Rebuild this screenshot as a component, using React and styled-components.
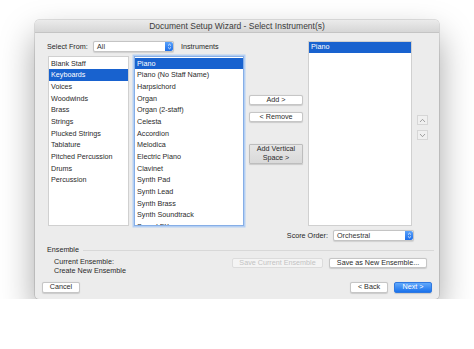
import React from 'react';
import styled, { createGlobalStyle, css } from 'styled-components';

const categories = [
  'Blank Staff', 'Keyboards', 'Voices', 'Woodwinds', 'Brass', 'Strings',
  'Plucked Strings', 'Tablature', 'Pitched Percussion', 'Drums', 'Percussion',
];

const instruments = [
  'Piano', 'Piano (No Staff Name)', 'Harpsichord', 'Organ', 'Organ (2-staff)',
  'Celesta', 'Accordion', 'Melodica', 'Electric Piano', 'Clavinet', 'Synth Pad',
  'Synth Lead', 'Synth Brass', 'Synth Soundtrack', 'Sound FX',
];

const GlobalStyle = createGlobalStyle`
  body {
    margin: 0;
    background: #fff;
    font-family: "Liberation Sans", Arial, sans-serif;
    color: #262626;
  }
`;

const Page = styled.div`
  padding: 20px 0 0 35px;
`;

const Window = styled.div`
  width: 404px;
  height: 279px;
  display: flex;
  flex-direction: column;
  background: #ececec;
  border-radius: 4px;
  overflow: hidden;
  box-shadow: 0 16px 34px rgba(0, 0, 0, 0.36), 0 0 0 0.5px rgba(0, 0, 0, 0.22);
`;

const TitleBar = styled.div`
  height: 13px;
  line-height: 13px;
  flex-shrink: 0;
  text-align: center;
  font-size: 8.5px;
  color: #3b3b3b;
  background: linear-gradient(#ebebeb, #d6d6d6);
  border-bottom: 1px solid #c4c4c4;
  box-sizing: border-box;
`;

const MainGrid = styled.div`
  margin-top: 8px;
  padding-left: 13px;
  display: grid;
  grid-template-columns: 81px 110px 54px 104px 11px;
  grid-template-rows: 11px 170px 10px;
  column-gap: 5px;
  row-gap: 4px;
  font-size: 7.2px;
`;

const HeaderRow = styled.div`
  grid-column: 1 / 3;
  grid-row: 1;
  display: flex;
  align-items: center;
  margin-left: -1px;
`;

const Label = styled.span`
  font-size: 7.2px;
  color: #262626;
  white-space: nowrap;
  ${(p) => p.$width && css`width: ${p.$width}px;`}
  ${(p) => p.$gap && css`margin-left: ${p.$gap}px;`}
`;

const SelectBox = styled.div`
  width: ${(p) => p.$width}px;
  height: 11px;
  box-sizing: border-box;
  display: flex;
  align-items: center;
  background: #fff;
  border: 0.5px solid #c4c4c4;
  border-radius: 2px;
  box-shadow: 0 0.5px 1px rgba(0, 0, 0, 0.12);
  font-size: 7.2px;
  padding-left: 3px;
  overflow: hidden;
`;

const SelectText = styled.span`
  flex: 1;
  color: #333;
`;

const Stepper = styled.div`
  width: 8px;
  height: 100%;
  background: linear-gradient(#5aa2fb, #1d6ee9);
  border-radius: 0 2px 2px 0;
  display: flex;
  align-items: center;
  justify-content: center;
`;

const ListBox = styled.div`
  grid-column: ${(p) => p.$col};
  grid-row: ${(p) => p.$row};
  background: #fff;
  box-sizing: border-box;
  overflow: hidden;
  padding-top: ${(p) => (p.$flush ? 0 : 0.5)}px;
  border: 1px solid ${(p) => (p.$focused ? '#86aee6' : '#d0d0d0')};
  ${(p) => p.$focused && css`box-shadow: 0 0 0 1.5px #b4cff3;`}
`;

const ListRow = styled.div`
  height: ${(p) => (p.$tall ? 10.5 : 11.7)}px;
  line-height: ${(p) => (p.$tall ? 10.5 : 11.7)}px;
  padding-left: 2px;
  white-space: nowrap;
  font-size: 7.2px;
  color: ${(p) => (p.$selected ? '#fff' : '#2a2a2a')};
  background: ${(p) => (p.$selected ? '#1862cf' : 'transparent')};
`;

const ButtonColumn = styled.div`
  grid-column: 3;
  grid-row: 2;
  display: flex;
  flex-direction: column;
  padding-top: 39px;
  gap: 7px;
`;

const Button = styled.div`
  box-sizing: border-box;
  height: ${(p) => p.$height || 10}px;
  ${(p) => p.$width && css`width: ${p.$width}px;`}
  display: flex;
  align-items: center;
  justify-content: center;
  text-align: center;
  font-size: 7.2px;
  line-height: 8.6px;
  white-space: nowrap;
  border-radius: 2px;
  color: #2b2b2b;
  background: #fff;
  border: 0.5px solid #c6c6c6;
  box-shadow: 0 0.5px 1px rgba(0, 0, 0, 0.14);
  ${(p) => p.$variant === 'bevel' && css`
    background: linear-gradient(#e6e6e6, #d9d9d9);
    border-color: #bdbdbd;
    border-radius: 1px;
    margin-top: 15px;
  `}
  ${(p) => p.$variant === 'disabled' && css`
    background: #f4f4f4;
    border-color: #dcdcdc;
    color: #c3c3c3;
    box-shadow: none;
  `}
  ${(p) => p.$variant === 'primary' && css`
    background: linear-gradient(#62a9fb, #1a72ec);
    border-color: #2f78e0;
    color: #fff;
  `}
`;

const ArrowColumn = styled.div`
  grid-column: 5;
  grid-row: 1 / 3;
  display: flex;
  flex-direction: column;
  padding-top: 74px;
  gap: 5px;
`;

const ArrowButton = styled.div`
  width: 11px;
  height: 10px;
  box-sizing: border-box;
  border: 0.5px solid #d6d6d6;
  background: #f0f0f0;
  display: flex;
  align-items: center;
  justify-content: center;
`;

const ScoreRow = styled.div`
  grid-column: 1 / -1;
  grid-row: 3;
  margin-top: 1.5px;
  display: flex;
  align-items: center;
  justify-content: flex-end;
  gap: 5px;
  padding-right: 14px;
`;

const EnsembleHeader = styled.div`
  margin: 5px 5px 0 12px;
  height: 8px;
  display: flex;
  align-items: center;
  font-size: 7.2px;
`;

const Rule = styled.div`
  flex: 1;
  height: 1px;
  margin: 3px 0 0 4px;
  background: #d8d8d8;
`;

const EnsembleRow = styled.div`
  margin-top: 5px;
  padding: 0 12px 0 19px;
  display: flex;
  align-items: flex-start;
`;

const Info = styled.div`
  font-size: 7.2px;
  line-height: 8.6px;
  color: #2a2a2a;
`;

const ButtonGroup = styled.div`
  margin-left: auto;
  display: flex;
  gap: 6px;
`;

const Footer = styled.div`
  margin-top: auto;
  padding: 0 7px 6.5px 7px;
  display: flex;
  align-items: center;
`;

const Chevrons = () => (
  <svg width="5" height="7" viewBox="0 0 5 7">
    <path d="M1 2.6 L2.5 1.2 L4 2.6 M1 4.4 L2.5 5.8 L4 4.4" fill="none" stroke="#fff" strokeWidth="0.8" />
  </svg>
);

const Chevron = ({ up }) => (
  <svg width="7" height="5" viewBox="0 0 7 5">
    <path d={up ? 'M1 4 L3.5 1.3 L6 4' : 'M1 1 L3.5 3.7 L6 1'} fill="none" stroke="#8a8a8a" strokeWidth="0.8" />
  </svg>
);

function Select({ width, value }) {
  return (
    <SelectBox $width={width}>
      <SelectText>{value}</SelectText>
      <Stepper><Chevrons /></Stepper>
    </SelectBox>
  );
}

export default function App() {
  return (
    <Page>
      <GlobalStyle />
      <Window>
        <TitleBar>Document Setup Wizard - Select Instrument(s)</TitleBar>
        <MainGrid>
          <HeaderRow>
            <Label $width={46}>Select From:</Label>
            <Select width={81} value="All" />
            <Label $gap={7}>Instruments</Label>
          </HeaderRow>

          <ListBox $col={1} $row={2}>
            {categories.map((c) => (
              <ListRow key={c} $selected={c === 'Keyboards'}>{c}</ListRow>
            ))}
          </ListBox>

          <ListBox $col={2} $row={2} $focused>
            {instruments.map((i) => (
              <ListRow key={i} $selected={i === 'Piano'}>{i}</ListRow>
            ))}
          </ListBox>

          <ButtonColumn>
            <Button>Add &gt;</Button>
            <Button>&lt; Remove</Button>
            <Button $variant="bevel" $height={20}>Add Vertical<br />Space &gt;</Button>
          </ButtonColumn>

          <ListBox $col={4} $row="1 / 3" $flush>
            <ListRow $selected $tall>Piano</ListRow>
          </ListBox>

          <ArrowColumn>
            <ArrowButton><Chevron up /></ArrowButton>
            <ArrowButton><Chevron /></ArrowButton>
          </ArrowColumn>

          <ScoreRow>
            <Label>Score Order:</Label>
            <Select width={81} value="Orchestral" />
          </ScoreRow>
        </MainGrid>

        <EnsembleHeader>
          Ensemble
          <Rule />
        </EnsembleHeader>

        <EnsembleRow>
          <Info>
            Current Ensemble:<br />
            Create New Ensemble
          </Info>
          <ButtonGroup>
            <Button $variant="disabled" $width={91}>Save Current Ensemble</Button>
            <Button $width={98}>Save as New Ensemble...</Button>
          </ButtonGroup>
        </EnsembleRow>

        <Footer>
          <Button $width={38} $height={10.5}>Cancel</Button>
          <ButtonGroup>
            <Button $width={38} $height={10.5}>&lt; Back</Button>
            <Button $variant="primary" $width={38} $height={10.5}>Next &gt;</Button>
          </ButtonGroup>
        </Footer>
      </Window>
    </Page>
  );
}
